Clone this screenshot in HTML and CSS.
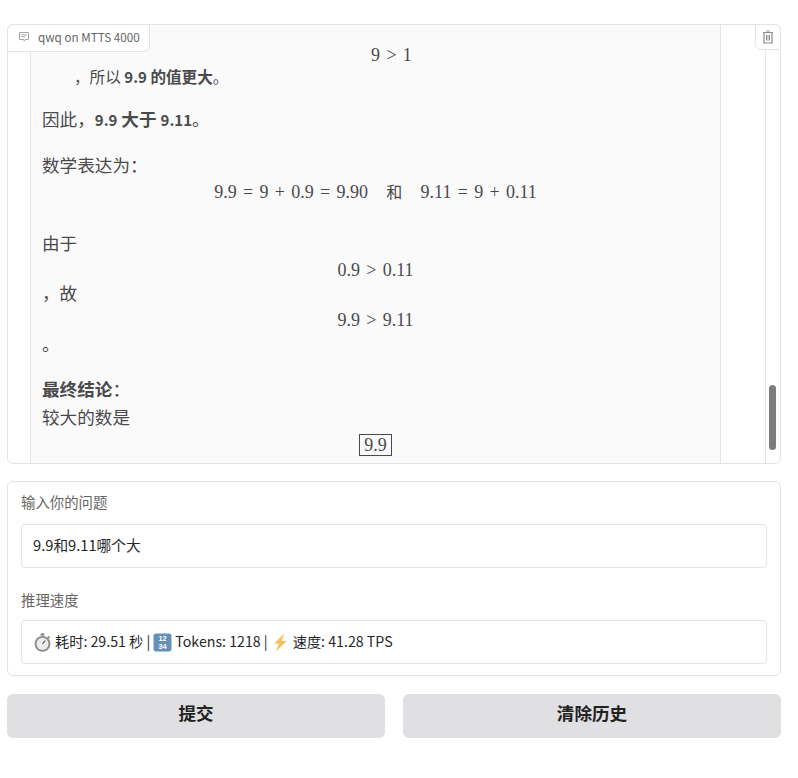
FILE: index.html
```html
<!DOCTYPE html>
<html lang="zh-CN">
<head>
  <meta charset="UTF-8" />
  <title>qwq on MTTS 4000</title>
  <link rel="stylesheet" href="styles.css">
</head>
<body>

<div class="chat">
  <div class="chat-label">
    <svg class="label-icon" viewBox="0 0 12 12" width="12" height="12">
      <path d="M1.5 1.5h9v7h-3l-1.5 1.5v-1.5h-4.500z" fill="none" stroke="#9a9a9f" stroke-width="0.9"/>
      <path d="M3.200 3.800h5.600M3.200 5.800h4" fill="none" stroke="#9a9a9f" stroke-width="0.9"/>
    </svg>
    qwq on MTTS 4000
  </div>
  <button class="trash">
    <svg viewBox="0 0 12 14" width="12" height="14">
      <path d="M4.500 1h3M1 2.500h10M2 2.500v10.500h8v-10.500" fill="none" stroke="#8a8a8a" stroke-width="1.200"/>
      <path d="M4.700 5v5.500M7.300 5v5.500" fill="none" stroke="#8a8a8a" stroke-width="1.400"/>
    </svg>
  </button>

  <div class="scroll">
    <div class="bubble">
      <div class="nested">
        <div class="math first">9 &gt; 1</div>
        <p class="line">，所以 <b><span class="num">9.9</span> 的值更大</b>。</p>
      </div>
      <p class="para top-a">因此，<b><span class="num">9.9</span> 大于 <span class="num">9.11</span></b>。</p>
      <p class="para top-b">数学表达为：</p>
      <div class="math eq">9.9 = 9 + 0.9 = 9.90 <span class="han">和</span> 9.11 = 9 + 0.11</div>
      <p class="para top-c">由于</p>
      <div class="math">0.9 &gt; 0.11</div>
      <p class="line">，故</p>
      <div class="math">9.9 &gt; 9.11</div>
      <p class="line dot">。</p>
      <p class="para top-d"><b>最终结论</b>：</p>
      <p class="line">较大的数是</p>
      <div class="math boxed"><span class="box">9.9</span></div>
    </div>
    <div class="track"><div class="thumb"></div></div>
  </div>
</div>

<div class="form-box">
  <label class="field-label">输入你的问题</label>
  <input class="field question" type="text" value="9.9和9.11哪个大" />
  <label class="field-label second">推理速度</label>
  <div class="field stats">
    <svg class="emoji" viewBox="0 0 18 18" width="19" height="19">
      <rect x="7.200" y="0.300" width="3.600" height="2.400" rx="0.800" fill="#8c8c8c"/>
      <path d="M14 3.200l1.600 1.600" stroke="#8c8c8c" stroke-width="1.800"/>
      <circle cx="9" cy="10.300" r="7.500" fill="#8a8a8a"/>
      <circle cx="9" cy="10.300" r="5.700" fill="#ececec"/>
      <path d="M9 10.300l2.600-3.200" stroke="#555" stroke-width="1.100"/>
    </svg>
    <span>耗时: 29.51 秒 |</span>
    <svg class="emoji" viewBox="0 0 18 18" width="19" height="19">
      <rect x="0.500" y="0.500" width="17" height="17" rx="2.500" fill="#6590b8"/>
      <text class="keycap" x="9" y="8" text-anchor="middle">12</text>
      <text class="keycap" x="9" y="15.500" text-anchor="middle">34</text>
    </svg>
    <span>Tokens: 1218 |</span>
    <svg class="emoji" viewBox="0 0 18 18" width="19" height="19">
      <path d="M12.500 0.500L3 10h4.500L4.500 17.500 15 7.500h-5z" fill="#f7c25e"/>
    </svg>
    <span>速度: 41.28 TPS</span>
  </div>
</div>

<div class="buttons">
  <button class="btn">提交</button>
  <button class="btn">清除历史</button>
</div>

</body>
</html>
```

FILE: styles.css
```css
html, body {
  margin: 0;
  background: #fff;
}

body {
  padding: 24px 17px 0 7px;
  font-family: "Noto Sans CJK SC", "Noto Sans", sans-serif;
  font-size: 17.6px;
  color: #4a4a4d;
}

.chat {
  position: relative;
  height: 440px;
  box-sizing: border-box;
  border: 1px solid #e4e4e7;
  border-radius: 6px;
}

.chat-label {
  position: absolute;
  top: -1px;
  left: -1px;
  z-index: 2;
  display: flex;
  align-items: center;
  gap: 8px;
  box-sizing: border-box;
  width: 143px;
  height: 28px;
  padding: 0 0 3px 10px;
  background: #fff;
  border: 1px solid #e4e4e7;
  border-radius: 6px 0 6px 0;
  font-size: 11.7px;
  color: #666;
}

.label-icon {
  flex: none;
}

.trash {
  position: absolute;
  top: -1px;
  right: -1px;
  z-index: 2;
  display: flex;
  align-items: center;
  justify-content: center;
  width: 26px;
  height: 26px;
  padding: 0;
  background: #fff;
  border: 1px solid #e4e4e7;
  border-radius: 0 6px 0 6px;
}

.scroll {
  display: flex;
  justify-content: space-between;
  height: 100%;
  overflow: hidden;
  border-radius: 6px;
}

.bubble {
  box-sizing: border-box;
  width: 691px;
  margin-left: 22px;
  padding: 18px 11px 0 11px;
  background: #fafafa;
  border-left: 1px solid #e4e4e7;
  border-right: 1px solid #e4e4e7;
}

.track {
  position: relative;
  width: 14px;
  border-left: 1px solid #e4e4e7;
}

.thumb {
  position: absolute;
  top: 360px;
  left: 3px;
  width: 7px;
  height: 65px;
  border-radius: 4px;
  background: #7d7d7d;
}

.nested {
  padding-left: 32px;
}

p {
  margin: 0;
}

b {
  font-weight: 700;
}

.num {
  font-size: 15px;
}

.line,
.para {
  height: 26px;
  line-height: 24px;
}

.nested .line {
  font-size: 15.6px;
}

.top-a { margin-top: 17px; }
.top-b { margin-top: 20px; }
.top-c { margin-top: 28px; }
.top-d { margin-top: 19px; height: 28px; }
.dot { margin-top: 1px; }

.math {
  height: 23px;
  margin-top: 1px;
  line-height: 24px;
  text-align: center;
  font-family: "Liberation Serif", "Noto Sans CJK SC", serif;
  font-size: 18px;
  word-spacing: 1.8px;
}

.first {
  height: 21px;
  margin-top: 0;
}

.eq {
  height: 24px;
  margin-top: 0;
}

.eq .han {
  margin: 0 12px;
  font-family: "Noto Sans CJK SC", sans-serif;
  font-size: 16px;
}

.boxed {
  margin-top: 2px;
}

.box {
  display: inline-block;
  padding: 0 4px;
  line-height: 20px;
  border: 1px solid #4a4a4d;
}

.form-box {
  box-sizing: border-box;
  height: 195px;
  margin-top: 17px;
  padding: 10px 13px;
  border: 1px solid #e4e4e7;
  border-radius: 6px;
}

.field-label {
  display: block;
  height: 19px;
  margin-bottom: 13px;
  line-height: 19px;
  font-size: 14.4px;
  color: #666;
}

.second {
  margin-top: 22px;
  margin-bottom: 11px;
}

.field {
  display: flex;
  align-items: center;
  box-sizing: border-box;
  width: 100%;
  height: 44px;
  padding: 0 11px 3px;
  background: #fff;
  border: 1px solid #e4e4e7;
  border-radius: 4px;
  font-family: inherit;
  font-size: 14.2px;
  color: #27272a;
}

.question {
  font-size: 14.7px;
}

.stats {
  gap: 3px;
}

.emoji {
  flex: none;
  margin-top: 3px;
}

.keycap {
  font-family: "Liberation Sans", sans-serif;
  font-size: 7px;
  font-weight: 700;
  fill: #fff;
}

.buttons {
  display: flex;
  gap: 18px;
  margin-top: 18px;
}

.btn {
  flex: 1;
  height: 44px;
  padding: 0 0 7px;
  background: #e0e0e2;
  border: none;
  border-radius: 6px;
  font-family: inherit;
  font-size: 17.6px;
  font-weight: 700;
  color: #222;
}
```
